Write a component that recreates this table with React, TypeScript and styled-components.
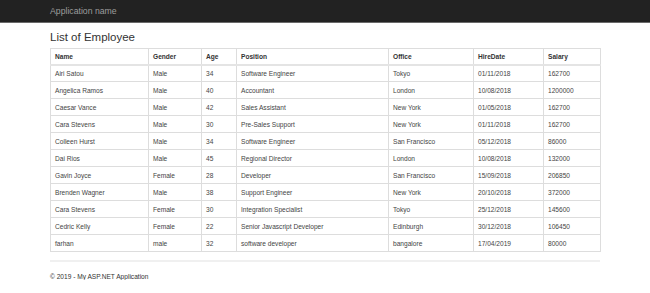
import styled, { createGlobalStyle } from "styled-components";

interface Employee {
  name: string;
  gender: string;
  age: number;
  position: string;
  office: string;
  hireDate: string;
  salary: number;
}

const employees: Employee[] = [
  { name: "Airi Satou", gender: "Male", age: 34, position: "Software Engineer", office: "Tokyo", hireDate: "01/11/2018", salary: 162700 },
  { name: "Angelica Ramos", gender: "Male", age: 40, position: "Accountant", office: "London", hireDate: "10/08/2018", salary: 1200000 },
  { name: "Caesar Vance", gender: "Male", age: 42, position: "Sales Assistant", office: "New York", hireDate: "01/05/2018", salary: 162700 },
  { name: "Cara Stevens", gender: "Male", age: 30, position: "Pre-Sales Support", office: "New York", hireDate: "01/11/2018", salary: 162700 },
  { name: "Colleen Hurst", gender: "Male", age: 34, position: "Software Engineer", office: "San Francisco", hireDate: "05/12/2018", salary: 86000 },
  { name: "Dai Rios", gender: "Male", age: 45, position: "Regional Director", office: "London", hireDate: "10/08/2018", salary: 132000 },
  { name: "Gavin Joyce", gender: "Female", age: 28, position: "Developer", office: "San Francisco", hireDate: "15/09/2018", salary: 206850 },
  { name: "Brenden Wagner", gender: "Male", age: 38, position: "Support Engineer", office: "New York", hireDate: "20/10/2018", salary: 372000 },
  { name: "Cara Stevens", gender: "Female", age: 30, position: "Integration Specialist", office: "Tokyo", hireDate: "25/12/2018", salary: 145600 },
  { name: "Cedric Kelly", gender: "Female", age: 22, position: "Senior Javascript Developer", office: "Edinburgh", hireDate: "30/12/2018", salary: 106450 },
  { name: "farhan", gender: "male", age: 32, position: "software developer", office: "bangalore", hireDate: "17/04/2019", salary: 80000 },
];

const columns = [
  { label: "Name", width: 98 },
  { label: "Gender", width: 53 },
  { label: "Age", width: 35 },
  { label: "Position", width: 152 },
  { label: "Office", width: 85 },
  { label: "HireDate", width: 70 },
  { label: "Salary", width: 57 },
];

const GlobalStyle = createGlobalStyle`
  html, body {
    margin: 0;
    padding: 0;
    background: #fff;
    font-family: "Liberation Sans", Arial, sans-serif;
    color: #333;
  }
`;

const Navbar = styled.header`
  height: 23px;
  background: #222;
  border-bottom: 1px solid #6a6a6a;
  box-sizing: border-box;
`;

const Container = styled.div`
  width: 550px;
  margin: 0 auto;
`;

const Brand = styled.a`
  display: block;
  height: 22px;
  line-height: 22px;
  font-size: 8.7px;
  color: #9d9d9d;
  text-decoration: none;
`;

const Title = styled.h2`
  margin: 8px 0 4px;
  font-size: 11.5px;
  line-height: 13px;
  font-weight: 500;
  color: #333;
`;

const Table = styled.table`
  width: 550px;
  table-layout: fixed;
  border-collapse: collapse;
  font-size: 6.6px;
`;

const HeadCell = styled.th`
  height: 16px;
  padding: 0 4px;
  text-align: left;
  font-weight: bold;
  color: #333;
  border: 1px solid #ddd;
  border-bottom: 2px solid #e4e4e4;
  box-sizing: border-box;
`;

const Cell = styled.td`
  height: 17px;
  padding: 0 4px;
  color: #444;
  border: 1px solid #ddd;
  box-sizing: border-box;
  white-space: nowrap;
`;

const Rule = styled.hr`
  margin: 8px 0 0;
  border: 0;
  border-top: 2px solid #f0f0f0;
`;

const Footer = styled.footer`
  padding-top: 11px;
  font-size: 6.6px;
  color: #333;
`;

export default function App() {
  return (
    <>
      <GlobalStyle />
      <Navbar>
        <Container>
          <Brand href="#">Application name</Brand>
        </Container>
      </Navbar>
      <Container>
        <Title>List of Employee</Title>
        <Table>
          <colgroup>
            {columns.map((c) => (
              <col key={c.label} style={{ width: c.width }} />
            ))}
          </colgroup>
          <thead>
            <tr>
              {columns.map((c) => (
                <HeadCell key={c.label}>{c.label}</HeadCell>
              ))}
            </tr>
          </thead>
          <tbody>
            {employees.map((e, i) => (
              <tr key={i}>
                <Cell>{e.name}</Cell>
                <Cell>{e.gender}</Cell>
                <Cell>{e.age}</Cell>
                <Cell>{e.position}</Cell>
                <Cell>{e.office}</Cell>
                <Cell>{e.hireDate}</Cell>
                <Cell>{e.salary}</Cell>
              </tr>
            ))}
          </tbody>
        </Table>
        <Rule />
        <Footer>© 2019 - My ASP.NET Application</Footer>
      </Container>
    </>
  );
}
